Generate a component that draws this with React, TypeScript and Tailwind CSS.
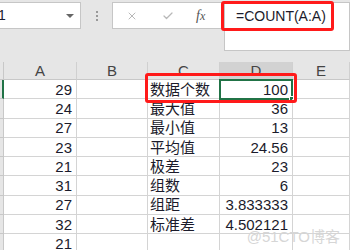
import { X, Check } from "lucide-react";

const rows = [
  { a: "29", c: "数据个数", d: "100" },
  { a: "24", c: "最大值", d: "36" },
  { a: "27", c: "最小值", d: "13" },
  { a: "23", c: "平均值", d: "24.56" },
  { a: "21", c: "极差", d: "23" },
  { a: "31", c: "组数", d: "6" },
  { a: "27", c: "组距", d: "3.833333" },
  { a: "32", c: "标准差", d: "4.502121" },
  { a: "21", c: "", d: "" },
];

const font = { fontFamily: '"Liberation Sans", "Noto Sans CJK SC", sans-serif' };

export default function App() {
  return (
    <div className="relative h-[250px] w-[350px] overflow-hidden bg-white text-[#1b1b2b]" style={font}>
      {/* formula toolbar */}
      <div className="flex h-[62px] items-start bg-[#e6e6e6] pt-[2px]">
        <div className="ml-[-20px] flex h-[27px] w-[101px] shrink-0 items-center justify-between border border-[#c6c6c6] bg-white pl-[7px] pr-[6px] text-[14px]">
          <span>D1</span>
          <span className="h-0 w-0 border-x-[4px] border-t-[4px] border-x-transparent border-t-[#666]" />
        </div>
        <div className="flex h-[27px] w-[31px] shrink-0 flex-col items-center justify-center gap-[2px]">
          <span className="h-[2px] w-[2px] bg-[#999]" />
          <span className="h-[2px] w-[2px] bg-[#999]" />
          <span className="h-[2px] w-[2px] bg-[#999]" />
        </div>
        <div className="flex h-[27px] w-[113px] shrink-0 items-center border border-[#c6c6c6] bg-white">
          <X className="ml-[13px] h-[12px] w-[12px] text-[#b8b8b8]" strokeWidth={2} />
          <Check className="ml-[24px] h-[12px] w-[12px] text-[#b8b8b8]" strokeWidth={2.5} />
          <span className="ml-[22px] font-serif text-[14px] italic text-[#555]" style={{ fontFamily: '"Liberation Serif", serif' }}>
            f<span className="text-[12px]">x</span>
          </span>
        </div>
        <div className="-ml-px h-[49px] flex-1 border border-[#c6c6c6] bg-white">
          <div className="flex h-[27px] items-center pl-[11px] text-[14px]">=COUNT(A:A)</div>
        </div>
      </div>

      {/* sheet grid */}
      <div className="grid grid-cols-[4px_73px_71px_72px_73px_1fr] grid-rows-[18px_repeat(9,19.3px)] text-[15px]">
        <div className="border-b border-r border-[#c8c8c8] bg-[#e6e6e6]" />
        {["A", "B", "C", "D", "E"].map((h) => (
          <div
            key={h}
            className={`flex items-center justify-center border-b border-r border-b-[#c8c8c8] border-r-[#d0d0d0] leading-none text-[#444] ${
              h === "D" ? "bg-[#d2d2d2]" : "bg-[#e6e6e6]"
            }`}
          >
            {h}
          </div>
        ))}
        {rows.map((r, i) => (
          <Row key={i} idx={i} {...r} />
        ))}
      </div>

      {/* overlays */}
      <div className="pointer-events-none absolute left-[221px] top-[1px] h-[30px] w-[113px] rounded-[3px] border-[3px] border-[#ff1a1a]" />
      <div className="pointer-events-none absolute left-[145px] top-[73px] h-[30px] w-[152px] rounded-[3px] border-[3px] border-[#ff1a1a]" />
      <div className="pointer-events-none absolute bottom-[2px] right-[10px] text-[15px] text-[#d6d6d6]">@51CTO博客</div>
    </div>
  );
}

function Row({ idx, a, c, d }: { idx: number; a: string; c: string; d: string }) {
  const cell = "flex items-center border-b border-r border-[#d4d4d4] leading-none";
  return (
    <>
      <div className={`border-b border-r border-[#c8c8c8] bg-[#e6e6e6] ${idx === 0 ? "border-r-2 border-r-[#217346]" : ""}`} />
      <div className={`${cell} justify-end pr-[4px]`}>{a}</div>
      <div className={cell} />
      <div className={`${cell} pl-[2px]`}>{c}</div>
      <div className={`${cell} relative justify-end pr-[4px]`}>
        {d}
        {idx === 0 && (
          <div className="absolute -left-px -top-px h-[21.3px] w-[74px] border-2 border-[#217346]">
            <span className="absolute -bottom-[3px] -right-[3px] h-[5px] w-[5px] border border-white bg-[#217346]" />
          </div>
        )}
      </div>
      <div className={cell} />
    </>
  );
}
